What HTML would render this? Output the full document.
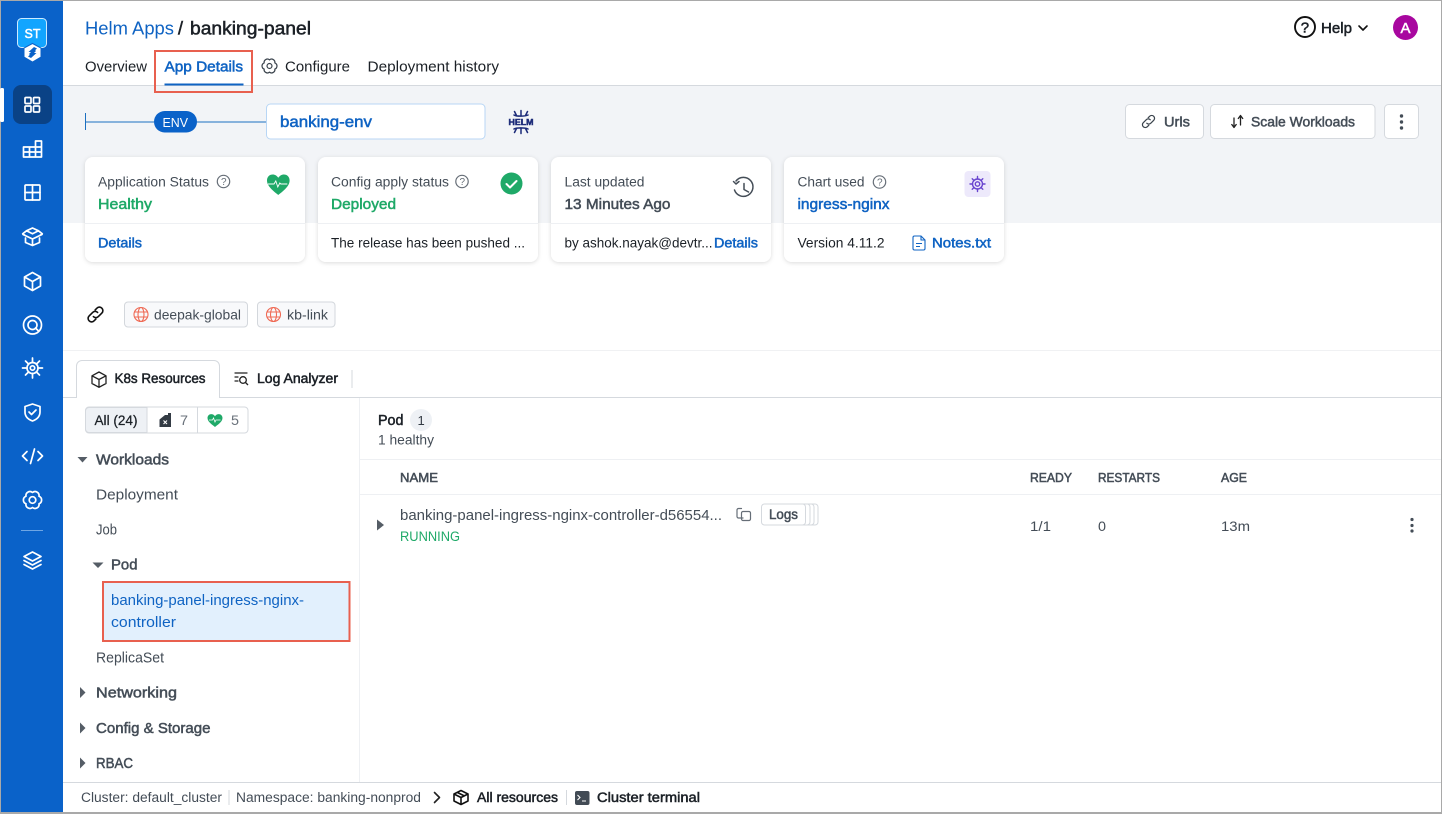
<!DOCTYPE html>
<html lang="en"><head><meta charset="utf-8"><title>banking-panel</title>
<style>
html,body{margin:0;padding:0;background:#fff;width:1442px;height:814px;overflow:hidden}
svg{display:block}
text{font-family:"Liberation Sans",sans-serif;font-size:14px;fill:currentColor;color:#2c3540;white-space:pre}
.s{stroke:currentColor;stroke-width:.5px}
.b{color:#0f63c3}.g{color:#1fa968}.m{color:#444d57}.d{color:#1b2026}.t{font-size:13.5px}
.i{fill:none;stroke:#fff;stroke-width:1.7;stroke-linecap:round;stroke-linejoin:round}
.k{fill:none;stroke:#3b444d;stroke-width:1.3;stroke-linecap:round;stroke-linejoin:round}
</style></head><body>
<svg width="1442" height="814" viewBox="0 0 1442 814" xmlns="http://www.w3.org/2000/svg">
<rect width="1442" height="814" fill="#fff"/>
<!-- grey band -->
<rect x="63" y="86" width="1378" height="137" fill="#f2f4f7"/>
<rect x="63" y="85" width="1378" height="1" fill="#d5d9de"/>
<!-- sidebar -->
<rect x="1" y="0" width="62" height="814" fill="#0a62c9"/>
<rect x="13" y="85" width="39" height="39" rx="8" fill="#0a4286"/>
<!-- logo -->
<rect x="17.500" y="18.500" width="29" height="29" rx="4" fill="#12a5ff" stroke="#cdeaff"/>
<text x="24.500" y="38" textLength="16" lengthAdjust="spacingAndGlyphs" class="s" style="font-size:13px;color:#fff">ST</text>
<path d="M32.500 43.500l8.500 4.500v9l-8.500 5-8.500-5v-9z" fill="#fff" stroke="#0a62c9" stroke-width="1"/>
<path d="M34 47l-5.500 5h2.500l-2 2 2 2 2-2-1-1 5-4.500zM31 58l5.500-5h-2.500l2-2-2-2-2 2 1 1-5 4.500z" fill="#0a62c9"/>
<!-- nav icons -->
<g class="i">
<rect x="25" y="97.500" width="6" height="6" rx="1"/><rect x="33.500" y="97.500" width="6" height="6" rx="1"/><rect x="25" y="106" width="6" height="6" rx="1"/><rect x="33.500" y="106" width="6" height="6" rx="1"/>
<path d="M23.500 157V147h12v-6h6v16zM23.500 152h18M29.500 147v10M35.500 141v16M35.500 147h6"/>
<rect x="25" y="185" width="15" height="15" rx="1"/><path d="M32.500 185v15M25 192.500h15"/>
<path d="M32.500 228l-6 2.800 6 3 6-3zM26.500 230.800l-3.800 3 3 2M38.500 230.800l3.800 3-3 2M23 234.500l9.500 4.500 9.500-4.500M32.500 239v6.500M25.500 238v4.500l7 3 7-3V238"/>
<path d="M32.500 272.500l8 4.500v9l-8 4.500-8-4.500v-9zM24.500 277l8 4.500 8-4.500M32.500 281.500v9"/>
<circle cx="32.500" cy="325" r="9"/><circle cx="32.500" cy="325" r="4.500"/><path d="M35.500 328l3 3"/>
<circle cx="32.500" cy="368" r="5.500"/><circle cx="32.500" cy="368" r="2.200"/><path d="M32.500 358v4.500M32.500 373.500v4.500M22.500 368H27M38 368h4.500M25.500 361l3 3M36.500 372l3 3M25.500 375l3-3M36.500 364l3-3"/>
<path d="M32.500 404l7.500 2.500v5.500c0 4.500-3.500 7.500-7.500 9-4-1.500-7.500-4.500-7.500-9v-5.500z"/><path d="M29 412l2.500 2.500 4.500-4.500"/>
<path d="M27 451.500l-4.500 4.500 4.500 4.500M38 451.500l4.500 4.500-4.500 4.500M34.500 449l-4 14.500"/>
<g transform="translate(32.500 500)"><path d="M6.500-3.750A4 4 0 0 1 6.500 3.750A4 4 0 0 1 0 7.500A4 4 0 0 1-6.500 3.750A4 4 0 0 1-6.500-3.750A4 4 0 0 1 0-7.500A4 4 0 0 1 6.500-3.750z"/><circle r="3.300"/></g>
<path d="M32.500 552l8.500 4.500-8.500 4.500-8.500-4.500zM24 560.500l8.500 4.500 8.500-4.500M24 564.500l8.500 4.500 8.500-4.500"/>
</g>
<rect x="21" y="530" width="22" height="1" fill="#6fa6e4"/>

<!-- header -->
<text x="85" y="34.500" textLength="89" lengthAdjust="spacingAndGlyphs" class="b" style="font-size:18px">Helm Apps</text>
<text x="178" y="34.500" class="d s" style="font-size:18px">/</text>
<text x="190" y="34.500" textLength="121" lengthAdjust="spacingAndGlyphs" class="d s" style="font-size:18px">banking-panel</text>
<text x="85" y="71.500" textLength="62" lengthAdjust="spacingAndGlyphs" class="d" style="font-size:14.500px">Overview</text>
<text x="164.500" y="71.500" textLength="78.500" lengthAdjust="spacingAndGlyphs" class="b s" style="font-size:14.500px">App Details</text>
<text x="285" y="71.500" textLength="65" lengthAdjust="spacingAndGlyphs" class="d" style="font-size:14.500px">Configure</text>
<text x="367.500" y="71.500" textLength="131.500" lengthAdjust="spacingAndGlyphs" class="d" style="font-size:14.500px">Deployment history</text>
<rect x="164.500" y="83.500" width="79" height="2" fill="#0f63c3"/>
<rect x="155" y="51" width="97" height="41" fill="none" stroke="#e8604f" stroke-width="2"/>
<g class="k" transform="translate(269.500 66) scale(.82)" style="stroke-width:1.500"><path d="M6.500-3.750A4 4 0 0 1 6.500 3.750A4 4 0 0 1 0 7.500A4 4 0 0 1-6.500 3.750A4 4 0 0 1-6.500-3.750A4 4 0 0 1 0-7.500A4 4 0 0 1 6.500-3.750z"/><circle r="3"/></g>

<!-- help -->
<circle cx="1305" cy="27" r="10" fill="none" stroke="#111" stroke-width="1.900"/>
<text x="1300.800" y="32.500" class="d s" style="font-size:15px">?</text>
<text x="1321" y="33" textLength="31" lengthAdjust="spacingAndGlyphs" class="d s" style="font-size:14.500px">Help</text>
<path d="M1359 26l4 4 4-4" fill="none" stroke="#111" stroke-width="1.600" stroke-linecap="round" stroke-linejoin="round"/>
<circle cx="1405.500" cy="27.500" r="12.500" fill="#a8079f"/>
<text x="1400.500" y="33" textLength="10" lengthAdjust="spacingAndGlyphs" class="s" style="font-size:14.500px;color:#fff">A</text>

<!-- env row -->
<path d="M85.500 113v17M85.500 122H154M197 122h69" stroke="#1c6fc0" stroke-width="1" fill="none"/>
<rect x="154" y="111" width="43" height="21.500" rx="10.700" fill="#0a62c9"/>
<text x="162.500" y="127" textLength="25.500" lengthAdjust="spacingAndGlyphs" style="font-size:13px;color:#fff">ENV</text>
<rect x="266.500" y="104" width="218.500" height="35" rx="4" fill="#fff" stroke="#b8d6f5"/>
<text x="280" y="127" textLength="92" lengthAdjust="spacingAndGlyphs" class="b s" style="font-size:16px">banking-env</text>
<!-- helm logo -->
<g fill="none" stroke="#1b2a78" stroke-width="1.500" stroke-linecap="round">
<path d="M514 115c2 1.500 11 1.500 14 0M521 110.500v5M514.500 111.500l2 4M527.500 111.500l-2 4M514 129c2-1.500 11-1.500 14 0M521 133.500v-5M514.500 132.500l2-4M527.500 132.500l-2-4"/>
</g>
<text x="508.500" y="125" textLength="25" lengthAdjust="spacingAndGlyphs" class="s" style="font-size:8.500px;font-weight:700;color:#1b2a78">HELM</text>

<!-- right buttons -->
<g fill="#fff" stroke="#d5d9de"><rect x="1125.500" y="104.500" width="78" height="34" rx="4"/><rect x="1210.500" y="104.500" width="164.500" height="34" rx="4"/><rect x="1384.500" y="104.500" width="34" height="34" rx="4"/></g>
<g class="k" transform="translate(1148.500 121.500) rotate(-45) scale(.82)" style="stroke-width:1.500"><path d="M3 0A3.500 3.500 0 0 0-.5-3.500H-5.500A3.500 3.500 0 0 0-5.500 3.500H-3"/><path d="M-3 0A3.500 3.500 0 0 0 .5 3.500H5.500A3.500 3.500 0 0 0 5.500-3.500H3"/></g>
<text x="1164" y="126.500" textLength="26" lengthAdjust="spacingAndGlyphs" class="m s" style="font-size:14px">Urls</text>
<path d="M1234 118v9M1231.800 124.500l2.200 3 2.200-3M1240.500 125v-9.500M1238.300 118.500l2.200-3 2.200 3" class="k" style="stroke:#222"/>
<text x="1251" y="126.500" textLength="104" lengthAdjust="spacingAndGlyphs" class="m s" style="font-size:14px">Scale Workloads</text>
<g fill="#444d57"><circle cx="1401.500" cy="116" r="1.700"/><circle cx="1401.500" cy="122" r="1.700"/><circle cx="1401.500" cy="128" r="1.700"/></g>

<!-- cards -->
<defs><filter id="sh" x="-10%" y="-10%" width="120%" height="125%"><feDropShadow dx="0" dy="1" stdDeviation="2" flood-color="#000" flood-opacity=".14"/></filter></defs>
<g fill="#fff" filter="url(#sh)"><rect x="85" y="157" width="220" height="105" rx="8"/><rect x="318" y="157" width="220" height="105" rx="8"/><rect x="551" y="157" width="220" height="105" rx="8"/><rect x="784" y="157" width="220" height="105" rx="8"/></g>
<g fill="#eef0f3"><rect x="85" y="223" width="220" height="1"/><rect x="318" y="223" width="220" height="1"/><rect x="551" y="223" width="220" height="1"/><rect x="784" y="223" width="220" height="1"/></g>

<text x="98" y="186.500" textLength="111" lengthAdjust="spacingAndGlyphs" class="m t">Application Status</text>
<g fill="none" stroke="#666e77" stroke-width="1.200"><circle cx="223.500" cy="181.500" r="6.200"/><circle cx="462" cy="181.500" r="6.200"/><circle cx="879.500" cy="182" r="6.200"/></g>
<text x="221" y="185" style="font-size:10px;color:#666e77">?</text><text x="459.500" y="185" style="font-size:10px;color:#666e77">?</text><text x="877" y="185.500" style="font-size:10px;color:#666e77">?</text>
<text x="98" y="209" textLength="54" lengthAdjust="spacingAndGlyphs" class="g s" style="font-size:14.500px">Healthy</text>
<path d="M278.300 195c-2.500-2.300-11.300-7.800-11.300-14.500 0-3.700 2.500-6 5.700-6 2.300 0 4.300 1.300 5.600 3.300 1.300-2 3.300-3.300 5.600-3.300 3.200 0 5.700 2.300 5.700 6 0 6.700-8.800 12.200-11.300 14.500z" fill="#1fa968"/>
<path d="M268 184h6l1.800-3 2 6 2-4 1 1h6.500" fill="none" stroke="#fff" stroke-width=".9"/>
<text x="98" y="247.500" textLength="44" lengthAdjust="spacingAndGlyphs" class="b s" style="font-size:14px">Details</text>

<text x="331" y="186.500" textLength="118" lengthAdjust="spacingAndGlyphs" class="m t">Config apply status</text>
<text x="331" y="209" textLength="65" lengthAdjust="spacingAndGlyphs" class="g s" style="font-size:14.500px">Deployed</text>
<circle cx="511.500" cy="183.500" r="11" fill="#1fa968"/>
<path d="M506.500 184l3.500 3.500 6.500-6.500" fill="none" stroke="#fff" stroke-width="2" stroke-linecap="round" stroke-linejoin="round"/>
<text x="331" y="247.500" textLength="194" lengthAdjust="spacingAndGlyphs" class="d" style="font-size:14px">The release has been pushed ...</text>

<text x="564.500" y="186.500" textLength="80" lengthAdjust="spacingAndGlyphs" class="m t">Last updated</text>
<text x="564.500" y="209" textLength="106" lengthAdjust="spacingAndGlyphs" class="m s" style="font-size:14.500px">13 Minutes Ago</text>
<path d="M736 181a9.500 9.500 0 1 1-1.500 9M733.500 181.500l2.500 2.500 3-2.500M744 183.500v6l4.500 2.500" fill="none" stroke="#444d57" stroke-width="1.500" stroke-linecap="round" stroke-linejoin="round"/>
<text x="564.500" y="247.500" textLength="148" lengthAdjust="spacingAndGlyphs" class="d" style="font-size:14px">by ashok.nayak@devtr...</text>
<text x="714" y="247.500" textLength="44" lengthAdjust="spacingAndGlyphs" class="b s" style="font-size:14px">Details</text>

<text x="797.500" y="186.500" textLength="67" lengthAdjust="spacingAndGlyphs" class="m t">Chart used</text>
<text x="797.500" y="209" textLength="92" lengthAdjust="spacingAndGlyphs" class="b s" style="font-size:14.500px">ingress-nginx</text>
<rect x="964.500" y="171" width="26" height="26" rx="4" fill="#ede9fb"/>
<g fill="none" stroke="#6a46cf" stroke-width="1.400" stroke-linecap="round"><circle cx="977.500" cy="184" r="5"/><circle cx="977.500" cy="184" r="2.200"/><path d="M977.500 176.500v2.500M977.500 189v2.500M970 184h2.500M982.500 184h2.500M972.200 178.700l1.800 1.800M981 187.500l1.800 1.800M972.200 189.300l1.800-1.800M981 180.500l1.800-1.800"/></g>
<text x="797.500" y="247.500" textLength="87" lengthAdjust="spacingAndGlyphs" class="d" style="font-size:14px">Version 4.11.2</text>
<path d="M914.500 236h6.500l4 4v8.500a1.500 1.500 0 0 1-1.500 1.500h-9a1.500 1.500 0 0 1-1.500-1.500V237.500a1.500 1.500 0 0 1 1.500-1.500zM921 236v4h4M916 243.500h6M916 246.500h4" fill="none" stroke="#0f63c3" stroke-width="1.100" stroke-linejoin="round"/>
<text x="932" y="247.500" textLength="59" lengthAdjust="spacingAndGlyphs" class="b s" style="font-size:14px">Notes.txt</text>

<!-- link row -->
<g transform="translate(95.500 314.500) rotate(-45)" fill="none" stroke="#111" stroke-width="1.600" stroke-linecap="round"><path d="M3 0A3.500 3.500 0 0 0-.5-3.500H-5.500A3.500 3.500 0 0 0-5.500 3.500H-3"/><path d="M-3 0A3.500 3.500 0 0 0 .5 3.500H5.500A3.500 3.500 0 0 0 5.500-3.500H3"/></g>
<g fill="#f8f9fb" stroke="#d3d7dc"><rect x="124.500" y="302" width="123" height="25" rx="3.500"/><rect x="257.500" y="302" width="77.500" height="25" rx="3.500"/></g>
<g fill="none" stroke="#ef6a55" stroke-width="1.100"><circle cx="141" cy="314.500" r="7"/><ellipse cx="141" cy="314.500" rx="3" ry="7"/><path d="M134.300 312h13.400M134.300 317h13.400"/><g transform="translate(132.500 0)"><circle cx="141" cy="314.500" r="7"/><ellipse cx="141" cy="314.500" rx="3" ry="7"/><path d="M134.300 312h13.400M134.300 317h13.400"/></g></g>
<text x="154" y="319.500" textLength="87" lengthAdjust="spacingAndGlyphs" class="m" style="font-size:14px">deepak-global</text>
<text x="287" y="319.500" textLength="41" lengthAdjust="spacingAndGlyphs" class="m" style="font-size:14px">kb-link</text>
<rect x="63" y="350" width="1378" height="1" fill="#f0f1f3"/>

<!-- tabs -->
<path d="M63 397.500h13.500V366a5.500 5.500 0 0 1 5.500-5.500h132a5.500 5.500 0 0 1 5.500 5.500v31.500H1441" fill="#fff" stroke="#d5d9de"/>
<g fill="none" stroke="#222" stroke-width="1.300" stroke-linejoin="round"><path d="M99 372l7 3.800v7.700l-7 3.800-7-3.800v-7.700zM92 375.800l7 3.700 7-3.700M99 379.500v8"/></g>
<text x="114.500" y="383" textLength="91" lengthAdjust="spacingAndGlyphs" class="d s" style="font-size:13.500px">K8s Resources</text>
<path d="M235 373h12M235 377h3M235 381h3" stroke="#222" stroke-width="1.200" fill="none" stroke-linecap="round"/>
<circle cx="243" cy="380" r="3.300" fill="none" stroke="#222" stroke-width="1.300"/><path d="M245.500 382.500l2.500 2.500" stroke="#222" stroke-width="1.300"/>
<text x="257" y="383" textLength="81" lengthAdjust="spacingAndGlyphs" class="d s" style="font-size:13.500px">Log Analyzer</text>
<rect x="351.500" y="370" width="1" height="18" fill="#d5d9de"/>
<rect x="359" y="398" width="1" height="385" fill="#eef0f3"/>

<!-- filters -->
<rect x="85.500" y="407" width="162.500" height="26" rx="3.500" fill="#fff" stroke="#d5d9de"/>
<path d="M147 407.500H89a3.500 3.500 0 0 0-3.500 3.500v18a3.500 3.500 0 0 0 3.500 3.500h58z" fill="#eef1f5" stroke="#d5d9de"/>
<rect x="197" y="407" width="1" height="26" fill="#d5d9de"/>
<text x="94.500" y="425" textLength="43" lengthAdjust="spacingAndGlyphs" class="d s" style="font-size:13.500px;stroke-width:.25px">All (24)</text>
<path d="M165 415h3v-2h3v14h-11.500v-7.500z" fill="#333b44"/><path d="M163.500 420.500l3.500 3.500M167 420.500l-3.500 3.500" stroke="#fff" stroke-width="1.100"/>
<text x="180" y="425" textLength="8" lengthAdjust="spacingAndGlyphs" style="font-size:14px;color:#6a727b">7</text>
<path d="M215 427c-1.500-1.500-7.500-4.800-7.500-9 0-2.300 1.700-3.900 3.700-3.900 1.500 0 3 .8 3.800 2.100.8-1.300 2.300-2.100 3.800-2.100 2 0 3.700 1.600 3.700 3.900 0 4.200-6 7.500-7.500 9z" fill="#1fa968"/><path d="M209 420h3.500l1-2 1.500 4 1-2h4.500" fill="none" stroke="#fff" stroke-width=".8"/>
<text x="231" y="425" textLength="8" lengthAdjust="spacingAndGlyphs" style="font-size:14px;color:#6a727b">5</text>

<!-- tree -->
<g fill="#555d66"><path d="M77.500 457h10l-5 5.500zM92.500 562.500h11l-5.500 5.500zM80 687l5.500 5.500-5.500 5.500zM80 722.500l5.500 5.500-5.500 5.500zM80 757.500l5.500 5.500-5.500 5.500z"/></g>
<text x="96" y="464.500" textLength="73" lengthAdjust="spacingAndGlyphs" class="m s" style="font-size:14.500px">Workloads</text>
<text x="96" y="499.500" textLength="82" lengthAdjust="spacingAndGlyphs" class="m" style="font-size:14.500px">Deployment</text>
<text x="96" y="534.500" textLength="21" lengthAdjust="spacingAndGlyphs" class="m" style="font-size:14.500px">Job</text>
<text x="111" y="569.500" textLength="26.500" lengthAdjust="spacingAndGlyphs" class="m s" style="font-size:14.500px">Pod</text>
<rect x="103" y="582" width="246.500" height="59" fill="#e2f0fd" stroke="#e8604f" stroke-width="2"/>
<text x="111" y="605" textLength="193" lengthAdjust="spacingAndGlyphs" class="b" style="font-size:14.500px">banking-panel-ingress-nginx-</text>
<text x="111" y="627" textLength="65" lengthAdjust="spacingAndGlyphs" class="b" style="font-size:14.500px">controller</text>
<text x="96" y="662.500" textLength="68" lengthAdjust="spacingAndGlyphs" class="m" style="font-size:14.500px">ReplicaSet</text>
<text x="96" y="697.500" textLength="81" lengthAdjust="spacingAndGlyphs" class="m s" style="font-size:14.500px">Networking</text>
<text x="96" y="733" textLength="114.500" lengthAdjust="spacingAndGlyphs" class="m s" style="font-size:14.500px">Config &amp; Storage</text>
<text x="96" y="768" textLength="37" lengthAdjust="spacingAndGlyphs" class="m s" style="font-size:14.500px">RBAC</text>

<!-- table -->
<text x="378" y="425" textLength="25.500" lengthAdjust="spacingAndGlyphs" class="d s" style="font-size:14.500px">Pod</text>
<circle cx="421" cy="420" r="11" fill="#eef1f5"/>
<text x="417.500" y="425" style="font-size:13px;color:#333b44">1</text>
<text x="378" y="444.500" textLength="56" lengthAdjust="spacingAndGlyphs" class="m" style="font-size:13.500px">1 healthy</text>
<rect x="360" y="459" width="1081" height="1" fill="#eef0f3"/>
<rect x="360" y="494" width="1081" height="1" fill="#eef0f3"/>
<text x="400" y="482" textLength="38" lengthAdjust="spacingAndGlyphs" class="m s" style="font-size:12.500px">NAME</text>
<text x="1030" y="482" textLength="42" lengthAdjust="spacingAndGlyphs" class="m s" style="font-size:12.500px">READY</text>
<text x="1098" y="482" textLength="62" lengthAdjust="spacingAndGlyphs" class="m s" style="font-size:12.500px">RESTARTS</text>
<text x="1221" y="482" textLength="26" lengthAdjust="spacingAndGlyphs" class="m s" style="font-size:12.500px">AGE</text>
<path d="M377 519.500l7 5.500-7 5.500z" fill="#555d66"/>
<text x="400" y="520" textLength="322" lengthAdjust="spacingAndGlyphs" class="m" style="font-size:14.500px">banking-panel-ingress-nginx-controller-d56554...</text>
<text x="400" y="541" textLength="60" lengthAdjust="spacingAndGlyphs" class="g" style="font-size:13.500px">RUNNING</text>
<path d="M743 518h-4.500a1.500 1.500 0 0 1-1.500-1.500V510a1.500 1.500 0 0 1 1.500-1.500h3" fill="none" stroke="#666e77" stroke-width="1.200" stroke-linecap="round"/>
<rect x="741.500" y="511.500" width="9" height="9" rx="1.500" fill="none" stroke="#666e77" stroke-width="1.200"/>
<g fill="#fff" stroke="#d5d9de"><rect x="803" y="504" width="15" height="21" rx="3"/><rect x="799" y="504" width="15" height="21" rx="3"/><rect x="795" y="504" width="15" height="21" rx="3"/><rect x="761.500" y="504" width="44" height="21" rx="3"/></g>
<text x="769" y="519" textLength="29" lengthAdjust="spacingAndGlyphs" class="m s" style="font-size:13.500px">Logs</text>
<text x="1030" y="531" textLength="21" lengthAdjust="spacingAndGlyphs" class="m" style="font-size:14px">1/1</text>
<text x="1098" y="531" textLength="8" lengthAdjust="spacingAndGlyphs" class="m" style="font-size:14px">0</text>
<text x="1221" y="531" textLength="29" lengthAdjust="spacingAndGlyphs" class="m" style="font-size:14px">13m</text>
<g fill="#444d57"><circle cx="1412" cy="519.500" r="1.600"/><circle cx="1412" cy="525.500" r="1.600"/><circle cx="1412" cy="531" r="1.600"/></g>

<!-- bottom bar -->
<rect x="63" y="782" width="1378" height="1" fill="#d5d9de"/>
<text x="81" y="802" textLength="141" lengthAdjust="spacingAndGlyphs" class="m" style="font-size:13.500px">Cluster: default_cluster</text>
<rect x="228.500" y="790" width="1" height="15" fill="#d5d9de"/>
<text x="236" y="802" textLength="185" lengthAdjust="spacingAndGlyphs" class="m" style="font-size:13.500px">Namespace: banking-nonprod</text>
<path d="M434.500 792.500l5 5-5 5" fill="none" stroke="#222" stroke-width="1.600" stroke-linecap="round" stroke-linejoin="round"/>
<g fill="none" stroke="#111" stroke-width="1.600" stroke-linejoin="round"><path d="M461 790.500l7 3.500v7l-7 3.500-7-3.500v-7z"/><path d="M454 794l7 3.500 7-3.500M461 797.500v7M457.500 792.500l7 3.500"/></g>
<text x="477" y="802" textLength="81" lengthAdjust="spacingAndGlyphs" class="d s" style="font-size:13.500px">All resources</text>
<rect x="566" y="790" width="1" height="15" fill="#d5d9de"/>
<rect x="575" y="791" width="14.500" height="14" rx="2" fill="#424b55"/>
<path d="M577.500 795l2.500 2.500-2.500 2.500M582 801h4" fill="none" stroke="#fff" stroke-width="1.100"/>
<text x="597" y="802" textLength="103" lengthAdjust="spacingAndGlyphs" class="d s" style="font-size:13.500px">Cluster terminal</text>

<!-- screenshot frame -->
<rect x="0" y="0" width="1442" height="1" fill="#a9a9a9"/>
<rect x="0" y="0" width="1" height="814" fill="#a9a9a9"/>
<rect x="1441" y="0" width="1" height="814" fill="#a9a9a9"/>
<rect x="0" y="812" width="1442" height="2" fill="#a9a9a9"/>
<rect x="0" y="88" width="4" height="34" rx="1.500" fill="#fff"/>
</svg>
</body></html>
